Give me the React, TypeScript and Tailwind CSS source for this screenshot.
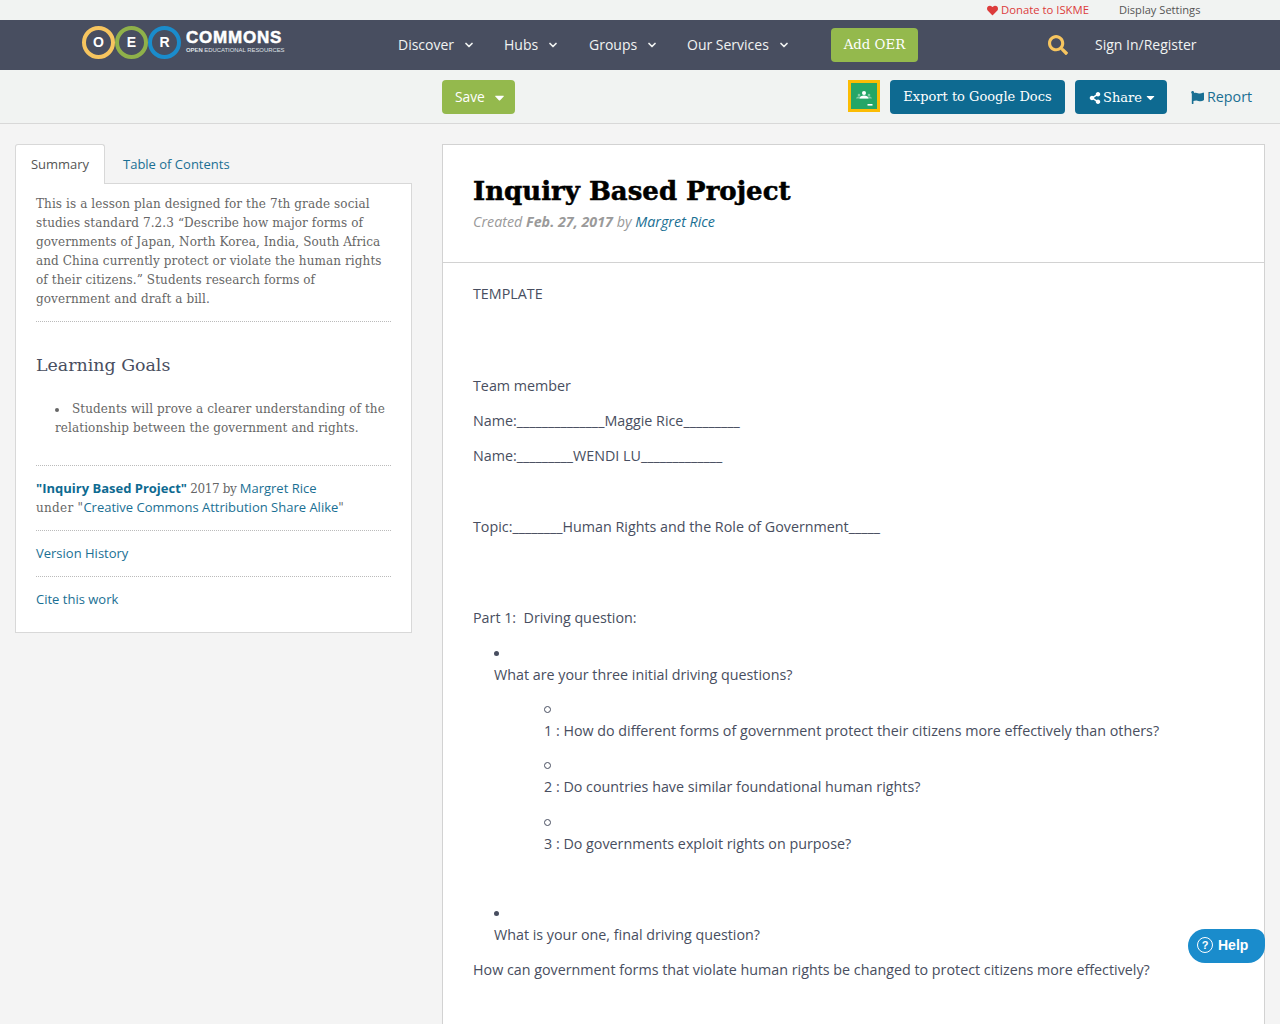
import { FaCaretDown, FaFlag, FaHeart, FaSearch, FaShareAlt } from 'react-icons/fa';
import { FiChevronDown } from 'react-icons/fi';

const slab = "font-['DejaVu_Serif',serif]";

function Ring({ letter, color }: { letter: string; color: string }) {
  return (
    <div className={`w-[33px] h-[33px] rounded-full border-[4px] flex items-center justify-center text-white text-[14px] font-bold font-['Liberation_Sans',sans-serif] ${color}`}>
      {letter}
    </div>
  );
}

function Logo() {
  return (
    <div className="flex items-center ml-[82px] w-[316px] shrink-0 pb-[5px]">
      <Ring letter="O" color="border-[#f7c55f]" />
      <Ring letter="E" color="border-[#8fb14a]" />
      <Ring letter="R" color="border-[#1a8ccc]" />
      <div className="ml-[5px] flex flex-col text-white font-['Liberation_Sans',sans-serif]">
        <span className="text-[17px] leading-[15px] font-bold tracking-[0.800px] [-webkit-text-stroke:0.5px_white]">COMMONS</span>
        <span className="text-[5.900px] leading-[10px] whitespace-nowrap text-[#dfe1e6]"><b>OPEN</b> EDUCATIONAL RESOURCES</span>
      </div>
    </div>
  );
}

function NavItem({ label, w }: { label: string; w: string }) {
  return (
    <div className={`flex items-center text-[14px] leading-[20px] text-[#f1f3f2] ${w}`}>
      <span>{label}</span>
      <FiChevronDown className="ml-[9px] text-[12px]" strokeWidth={3.5} />
    </div>
  );
}

function Dot() {
  return <div className="w-[5px] h-[5px] rounded-full bg-[#484e60]" />;
}

function Ring2() {
  return <div className="w-[7px] h-[7px] rounded-full border border-[#484e60]" />;
}

function ClassroomIcon() {
  return (
    <div className="w-[32px] h-[32px] border-[3px] border-[#fbbc05] bg-[#25a667]">
      <svg viewBox="0 0 26 26" width="26" height="26">
        <circle cx="8" cy="12" r="1.3" fill="#7fcaa3" />
        <circle cx="18" cy="12" r="1.3" fill="#7fcaa3" />
        <path d="M5 15.5c.4-1.3 1.6-1.9 3-1.900h10c1.400 0 2.600.6 3 1.900z" fill="#7fcaa3" />
        <circle cx="13" cy="10" r="2" fill="#fff" />
        <path d="M8.500 15.500c.3-2 2.200-3 4.500-3s4.200 1 4.500 3z" fill="#fff" />
        <rect x="16.500" y="21" width="5" height="1.600" fill="#fff" />
      </svg>
    </div>
  );
}

function DriveQuestion({ n, text }: { n: string; text: string }) {
  return (
    <div>
      <div className="h-[22px] flex items-center"><Ring2 /></div>
      <p className="leading-[21px]">{n} : {text}</p>
    </div>
  );
}

export default function App() {
  return (
    <div className="h-screen overflow-hidden bg-[#f4f4f4] text-[14.300px] text-[#484e60] font-['Open_Sans',sans-serif] relative">
      <div className="h-[20px] bg-[#f1f3f2] flex items-center text-[11.300px]">
        <div className="ml-[987px] flex items-center text-[#dc3c3c]">
          <FaHeart className="text-[11px] mr-[3px]" />
          <span>Donate to ISKME</span>
        </div>
        <span className="ml-[30px] text-[11.100px] text-[#555]">Display Settings</span>
      </div>

      <div className="h-[50px] bg-[#484e60] flex items-center">
        <Logo />
        <NavItem label="Discover" w="w-[106px]" />
        <NavItem label="Hubs" w="w-[85px]" />
        <NavItem label="Groups" w="w-[98px]" />
        <NavItem label="Our Services" w="w-[144px]" />
        <button className={`w-[87px] h-[34px] rounded-[4px] bg-[#94b94d] text-white text-[13.300px] ${slab}`}>Add OER</button>
        <FaSearch className="ml-[130px] text-[20px] text-[#f7c55f]" />
        <span className="ml-[27px] text-[14px] pb-[2px] text-[#f1f3f2]">Sign In/Register</span>
      </div>

      <div className="h-[54px] bg-[#f1f3f2] border-b border-[#d8d8d8] flex items-center pt-[1px]">
        <button className="ml-[442px] w-[73px] h-[34px] rounded-[4px] bg-[#94b94d] text-white text-[13.800px] pl-[13px] flex items-center">
          Save<FaCaretDown className="ml-[7px] text-[15px]" />
        </button>
        <div className="ml-[333px] mb-[2px]"><ClassroomIcon /></div>
        <button className={`ml-[10px] w-[175px] h-[34px] rounded-[4px] bg-[#0e6a91] text-white text-[13px] ${slab}`}>Export to Google Docs</button>
        <button className={`ml-[10px] w-[92px] h-[34px] rounded-[4px] bg-[#0e6a91] text-white text-[13px] pl-[14px] pt-[1px] flex items-center ${slab}`}>
          <FaShareAlt className="text-[12px] mr-[2px]" />Share<FaCaretDown className="ml-[2px] text-[13px]" />
        </button>
        <div className="ml-[24px] flex items-center text-[#1a6f93]">
          <FaFlag className="text-[13px] mr-[3px]" />Report
        </div>
      </div>

      <div className="flex items-start pt-[20px] pl-[15px]">
        <div className="w-[397px] shrink-0 mr-[30px]">
          <div className="flex h-[40px] text-[13px]">
            <div className="w-[90px] h-[40px] bg-white border border-b-0 border-[#d8d8d8] rounded-t-[3px] text-[#555] flex items-center justify-center relative z-10">Summary</div>
            <div className="ml-[18px] pt-[1px] flex items-center text-[#1a6f93]">Table of Contents</div>
          </div>
          <div className="bg-white border border-[#d8d8d8] -mt-[1px] px-[20px] pt-[11px] h-[450px]">
            <p className={`${slab} text-[12px] leading-[19px] tracking-[0.100px] text-[#666]`}>
              This is a lesson plan designed for the 7th grade social<br />
              studies standard 7.2.3 “Describe how major forms of<br />
              governments of Japan, North Korea, India, South Africa<br />
              and China currently protect or violate the human rights<br />
              of their citizens.” Students research forms of<br />
              government and draft a bill.
            </p>
            <div className="border-b border-dotted border-[#bbb] mt-[12px]" />
            <h2 className={`${slab} text-[17.400px] leading-[24px] text-[#484e60] mt-[31px]`}>Learning Goals</h2>
            <ul className={`${slab} text-[12px] leading-[19px] tracking-[0.100px] text-[#666] mt-[23px] pl-[19px] list-disc list-inside`}>
              <li>Students will prove a clearer understanding of the relationship between the government and rights.</li>
            </ul>
            <div className="border-b border-dotted border-[#bbb] mt-[27px]" />
            <div className="mt-[13px] text-[13px] text-[#666]">
              <div className="h-[19px] leading-[19px]">
                <b className="text-[#0e6a91]">"Inquiry Based Project"</b> <span className={`${slab} text-[12px] tracking-[-0.400px]`}>2017 by</span> <span className="text-[#1a6f93]">Margret Rice</span>
              </div>
              <div className="h-[19px] leading-[19px]">
                <span className={`${slab} text-[12px] tracking-[0.300px]`}>under "</span><span className="text-[#1a6f93]">Creative Commons Attribution Share Alike</span><span className={`${slab} text-[12px]`}>"</span>
              </div>
            </div>
            <div className="border-b border-dotted border-[#bbb] mt-[13px]" />
            <div className="mt-[13px] text-[13px] leading-[19px] text-[#1a6f93]">Version History</div>
            <div className="border-b border-dotted border-[#bbb] mt-[13px]" />
            <div className="mt-[13px] text-[13px] leading-[19px] text-[#1a6f93]">Cite this work</div>
          </div>
        </div>

        <div className="w-[823px] shrink-0 bg-white border border-[#d2d2d2] h-[1000px]">
          <div className="h-[118px] border-b border-[#d2d2d2] px-[30px] pt-[28px]">
            <h1 className={`${slab} font-bold text-[26px] leading-[36px] text-black [-webkit-text-stroke:0.5px_black]`}>Inquiry Based Project</h1>
            <div className="italic text-[#9a9a9a] leading-[20px] mt-[3px]">
              Created <b>Feb. 27, 2017</b> by <span className="text-[#1a6f93]">Margret Rice</span>
            </div>
          </div>
          <div className="px-[30px] pt-[20px] leading-[21px]">
            <p>TEMPLATE</p>
            <p className="mt-[71px]">Team member</p>
            <p className="mt-[14px]">Name:______________Maggie Rice_________</p>
            <p className="mt-[14px]">Name:_________WENDI LU_____________</p>
            <p className="mt-[50px]">Topic:________Human Rights and the Role of Government_____</p>
            <p className="mt-[70px]">Part 1:&nbsp; Driving question:</p>
            <div className="pl-[21px] mt-[14px]">
              <div className="h-[22px] flex items-center"><Dot /></div>
              <p>What are your three initial driving questions?</p>
              <div className="pl-[50px] mt-[13px] flex flex-col gap-[13px]">
                <DriveQuestion n="1" text="How do different forms of government protect their citizens more effectively than others?" />
                <DriveQuestion n="2" text="Do countries have similar foundational human rights?" />
                <div className="mt-[1px]">
                  <DriveQuestion n="3" text="Do governments exploit rights on purpose?" />
                </div>
              </div>
              <div className="h-[22px] flex items-center mt-[48px]"><Dot /></div>
              <p>What is your one, final driving question?</p>
            </div>
            <p className="mt-[14px]">How can government forms that violate human rights be changed to protect citizens more effectively?</p>
          </div>
        </div>
      </div>

      <div className="absolute left-[1188px] top-[929px] w-[77px] h-[34px] rounded-l-[17px] rounded-tr-[10px] rounded-br-[17px] bg-[#1a8ccc] text-white flex items-center pl-[9px] pb-[2px] font-['Liberation_Sans',sans-serif] font-bold text-[14px]">
        <span className="w-[16px] h-[16px] rounded-full border-[1.500px] border-white text-[11px] flex items-center justify-center mr-[5px]">?</span>
        Help
      </div>
    </div>
  );
}
